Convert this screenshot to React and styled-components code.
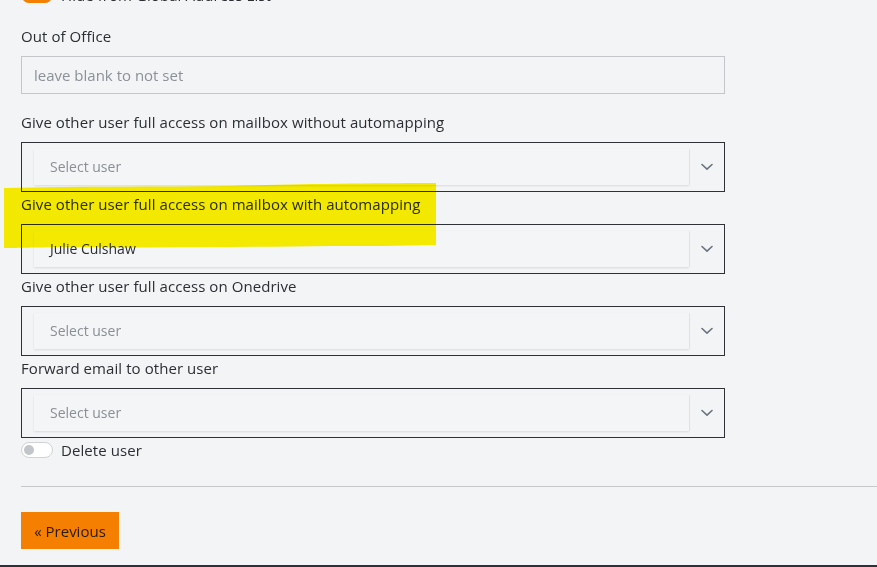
import React from "react";
import styled, { createGlobalStyle } from "styled-components";

const GlobalStyle = createGlobalStyle`
  html, body { margin: 0; padding: 0; background: #f3f4f6; }
  body { font-family: "Open Sans", "Noto Sans", Arial, sans-serif; color: #2b2f33; }
  * { box-sizing: border-box; }
`;

const Page = styled.div`
  position: relative;
  height: 567px;
  overflow: hidden;
  padding-left: 21px;
  border-bottom: 2px solid #2e3136;
`;

const Form = styled.div`
  margin-top: -17px;
  display: flex;
  flex-direction: column;
`;

const SwitchRow = styled.label`
  display: flex;
  align-items: center;
  gap: 8px;
  height: 24px;
  font-size: 15px;
  letter-spacing: 0.07px;
  color: #2b2f33;
  margin-bottom: ${(p) => p.$mb || 0}px;
`;

const Track = styled.span`
  position: relative;
  width: 32px;
  height: 16px;
  border-radius: 8px;
  background: ${(p) => (p.$on ? "#f57f00" : "#ffffff")};
  border: 1px solid ${(p) => (p.$on ? "#f57f00" : "#cfd2d6")};
  flex: none;
`;

const Knob = styled.span`
  position: absolute;
  top: 2px;
  left: ${(p) => (p.$on ? "18px" : "2px")};
  width: 10px;
  height: 10px;
  border-radius: 50%;
  background: ${(p) => (p.$on ? "#ffffff" : "#c2c5c9")};
`;

const Label = styled.div`
  font-size: 15px;
  letter-spacing: 0.07px;
  line-height: 24px;
  height: 24px;
  color: #2b2f33;
  margin-bottom: 8px;
  white-space: nowrap;
`;

const TextInput = styled.input`
  width: 704px;
  height: 38px;
  border: 1px solid #c3c6ca;
  background: #f3f4f6;
  padding: 0 12px;
  font-family: inherit;
  font-size: 15px;
  color: #2b2f33;
  margin-bottom: 16px;
  outline: none;
  &::placeholder { color: #8c9198; }
`;

const SelectBox = styled.div`
  width: 704px;
  height: 50px;
  border: 1px solid #2e3136;
  display: flex;
  align-items: stretch;
  padding: 6px 0 6px 12px;
`;

const Control = styled.div`
  flex: 1;
  background: #f4f5f7;
  box-shadow: 0 1px 2px rgba(0, 0, 0, 0.1), 1px 0 1px rgba(0, 0, 0, 0.04);
  display: flex;
  align-items: center;
  padding-left: 16px;
  padding-bottom: 1px;
  font-size: 14px;
  color: ${(p) => (p.$placeholder ? "#8a8f95" : "#2b2f33")};
`;

const Arrow = styled.div`
  width: 35px;
  display: flex;
  align-items: center;
  justify-content: center;
  color: #6b7280;
`;

const Separator = styled.hr`
  border: none;
  border-top: 1px solid #c5c7ca;
  margin: 24px 0 25px 0;
  width: 100%;
`;

const Button = styled.button`
  align-self: flex-start;
  width: 98px;
  height: 37px;
  background: #f57f00;
  border: none;
  font-family: inherit;
  font-size: 15px;
  color: #2a1a08;
  cursor: pointer;
  padding: 0;
`;

const Highlight = styled.svg`
  position: absolute;
  left: 0;
  top: 180px;
  width: 440px;
  height: 72px;
  mix-blend-mode: multiply;
  pointer-events: none;
`;

const Chevron = () => (
  <svg width="12" height="8" viewBox="0 0 12 8" fill="none">
    <path d="M1 1.5 L6 6.2 L11 1.5" stroke="currentColor" strokeWidth="1.6" strokeLinecap="round" strokeLinejoin="round" />
  </svg>
);

const Select = ({ value }) => (
  <SelectBox>
    <Control $placeholder={!value}>{value || "Select user"}</Control>
    <Arrow>
      <Chevron />
    </Arrow>
  </SelectBox>
);

const Toggle = ({ on, children, mb }) => (
  <SwitchRow $mb={mb}>
    <Track $on={on}>
      <Knob $on={on} />
    </Track>
    {children}
  </SwitchRow>
);

export default function App() {
  return (
    <>
      <GlobalStyle />
      <Page>
        <Form>
          <Toggle on mb={17}>Hide from Global Address List</Toggle>
          <Label>Out of Office</Label>
          <TextInput placeholder="leave blank to not set" />
          <Label>Give other user full access on mailbox without automapping</Label>
          <Select />
          <Label>Give other user full access on mailbox with automapping</Label>
          <Select value="Julie Culshaw" />
          <Label>Give other user full access on Onedrive</Label>
          <Select />
          <Label>Forward email to other user</Label>
          <Select />
          <Toggle>Delete user</Toggle>
          <Separator />
          <Button>« Previous</Button>
        </Form>
        <Highlight viewBox="0 0 440 72">
          <path
            d="M4 8 C80 6 160 7 230 6 C300 4 380 3 436 3 L436 65 C400 66 360 66 330 66 C250 67 150 68 80 67 C50 67 20 68 4 68 Z"
            fill="#fff300"
          />
        </Highlight>
      </Page>
    </>
  );
}
